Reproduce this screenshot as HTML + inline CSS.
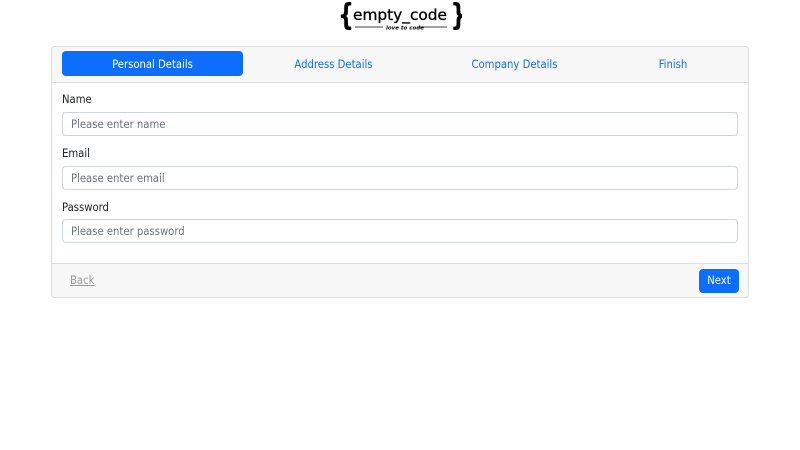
<!DOCTYPE html>
<html><head><style>
*{box-sizing:border-box;margin:0;padding:0}
body{width:800px;height:450px;background:#fff;font-family:"DejaVu Sans Condensed","DejaVu Sans","Liberation Sans",sans-serif;font-size:11.2px;color:#212529;position:relative}
.logo{position:absolute;left:338px;top:0;width:124px;height:32px}
.card{position:absolute;left:51px;top:46px;width:698px;height:252px;border:1px solid #dcdcdc;border-radius:4px;overflow:hidden}
.hd{height:36px;background:#f7f7f7;border-bottom:1px solid #dcdcdc;position:relative}
.tab{position:absolute;top:4px;height:25px;line-height:27px;text-align:center;color:#0d6efd;border-radius:4px}
.act{background:#0d6efd;color:#fff}
.lbl{position:absolute;left:10px}
.inp{position:absolute;left:10px;width:676px;height:24px;border:1px solid #ced4da;border-radius:4px;line-height:23px;padding-left:8px;color:#6c757d}
.ft{position:absolute;left:0;top:216px;width:100%;height:36px;background:#f7f7f7;border-top:1px solid #dcdcdc}
</style></head><body>
<svg class="logo" viewBox="0 0 124 32">
<text x="0" y="25" font-family="DejaVu Sans" font-size="30" font-weight="bold" transform="scale(0.75,1)">{</text>
<text x="150" y="25" font-family="DejaVu Sans" font-size="30" font-weight="bold" transform="scale(0.75,1)">}</text>
<text x="15" y="20" font-family="DejaVu Sans" font-size="15" textLength="94" lengthAdjust="spacingAndGlyphs" stroke="#000" stroke-width="0.3">empty_code</text>
<line x1="17" y1="27" x2="45" y2="27" stroke="#000" stroke-width="0.7"/>
<line x1="79" y1="27" x2="109" y2="27" stroke="#000" stroke-width="0.7"/>
<text x="48" y="29.5" font-family="DejaVu Sans" font-size="5.5" font-style="italic" font-weight="bold">love to code</text>
</svg>
<div class="card">
<div class="hd">
<div class="tab act" style="left:10px;width:181px">Personal Details</div>
<div class="tab" style="left:191px;width:181px">Address Details</div>
<div class="tab" style="left:372px;width:181px">Company Details</div>
<div class="tab" style="left:553px;width:136px">Finish</div>
</div>
<div class="lbl" style="top:46px">Name</div>
<div class="inp" style="top:65px">Please enter name</div>
<div class="lbl" style="top:100px">Email</div>
<div class="inp" style="top:119px">Please enter email</div>
<div class="lbl" style="top:154px">Password</div>
<div class="inp" style="top:172px">Please enter password</div>
<div class="ft">
<span style="position:absolute;left:18px;top:10px;color:#999;text-decoration:underline">Back</span>
<span style="position:absolute;left:647px;top:5px;width:40px;height:24px;line-height:24px;text-align:center;background:#0d6efd;color:#fff;border-radius:4px">Next</span>
</div>
</div>
</body></html>
